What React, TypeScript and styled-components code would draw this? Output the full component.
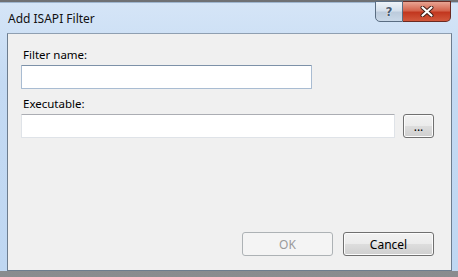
import styled, { createGlobalStyle } from "styled-components";

const GlobalStyle = createGlobalStyle`
  html, body {
    margin: 0;
    padding: 0;
    background: #7b7d80;
    overflow: hidden;
  }
  body {
    font-family: "Noto Sans", "Open Sans", "Liberation Sans", sans-serif;
    font-size: 12px;
  }
`;

const Screen = styled.div`
  width: 458px;
  height: 277px;
  display: flex;
  flex-direction: column;
  background: linear-gradient(#6f7174, #8a8c8f);
`;

const Window = styled.div`
  margin-top: 2px;
  height: 269px;
  display: flex;
  flex-direction: column;
  background: linear-gradient(180deg, #d5e5f7 0%, #c4daf3 30%, #bfd7f2 100%);
  border-top: 1px solid #9fb6cf;
  box-sizing: border-box;
`;

const TitleBar = styled.div`
  height: 30px;
  display: flex;
  align-items: flex-start;
  justify-content: space-between;
  padding-left: 8px;
  padding-right: 7px;
`;

const Title = styled.div`
  margin-top: 7px;
  font-size: 12px;
  color: #111;
`;

const CaptionButtons = styled.div`
  display: flex;
  margin-top: -2px;
`;

const CaptionButton = styled.div<{ $close?: boolean }>`
  width: ${(p) => (p.$close ? 48 : 28)}px;
  height: 21px;
  box-sizing: border-box;
  border: 1px solid ${(p) => (p.$close ? "#6b2a22" : "#5a6d82")};
  border-left-width: ${(p) => (p.$close ? 0 : 1)}px;
  border-radius: ${(p) => (p.$close ? "0 0 5px 0" : "0 0 0 5px")};
  background: ${(p) =>
    p.$close
      ? "linear-gradient(#e8a493 0%, #d4644d 45%, #c2371f 55%, #d2583c 100%)"
      : "linear-gradient(#eef3f8 0%, #d5e0ec 45%, #bccbdc 55%, #c9d8e8 100%)"};
  display: flex;
  align-items: center;
  justify-content: center;
  color: #4a5b70;
  font-family: "DejaVu Sans", sans-serif;
  font-weight: bold;
  font-size: 12px;
  text-shadow: 0 0 1px #fff, 0 0 1px #fff;
`;

const CloseGlyph = () => (
  <svg width="14" height="11" viewBox="0 0 14 11">
    <path d="M2.5 1.5 L11.5 9.5 M11.5 1.5 L2.5 9.5" stroke="#3b1a14" strokeWidth="4" strokeLinecap="round" />
    <path d="M2.5 1.5 L11.5 9.5 M11.5 1.5 L2.5 9.5" stroke="#ffffff" strokeWidth="2.2" strokeLinecap="round" />
  </svg>
);

const Client = styled.div`
  flex: 1;
  margin: 0 6px 0 7px;
  background: #f0f0f0;
  border: 1px solid #6d7d8f;
  border-top-color: #8f9fb1;
  display: flex;
  flex-direction: column;
  padding: 13px 17px 14px 13px;
  box-sizing: border-box;
`;

const Field = styled.div`
  display: flex;
  flex-direction: column;
  gap: 2px;
  margin-bottom: 7px;
`;

const Label = styled.label`
  padding-left: 2px;
  color: #000;
  font-size: 11.5px;
  line-height: 16px;
`;

const Row = styled.div`
  display: flex;
  align-items: center;
  gap: 8px;
`;

const TextInput = styled.div<{ $width: number; $focused?: boolean }>`
  width: ${(p) => p.$width}px;
  height: 24px;
  box-sizing: border-box;
  background: #fff;
  border: 1px solid ${(p) => (p.$focused ? "#a9bcd2" : "#dfe3e8")};
  border-top-color: ${(p) => (p.$focused ? "#7d91a8" : "#abadb3")};
  border-radius: 1px;
`;

const Spacer = styled.div`
  flex: 1;
`;

const Footer = styled.div`
  display: flex;
  justify-content: flex-end;
  gap: 10px;
`;

const Button = styled.div<{ $width: number; $disabled?: boolean }>`
  width: ${(p) => p.$width}px;
  height: 24px;
  box-sizing: border-box;
  border: 1px solid ${(p) => (p.$disabled ? "#adb2b5" : "#707070")};
  border-radius: 3px;
  background: ${(p) =>
    p.$disabled
      ? "#f4f4f4"
      : "linear-gradient(#f2f2f2 0%, #ebebeb 50%, #dddddd 51%, #cfcfcf 100%)"};
  box-shadow: inset 0 0 0 1px ${(p) => (p.$disabled ? "#f4f4f4" : "#fcfcfc")};
  color: ${(p) => (p.$disabled ? "#9a9a9a" : "#000")};
  display: flex;
  align-items: center;
  justify-content: center;
  font-size: 12px;
`;

const App = () => {
  return (
    <>
      <GlobalStyle />
      <Screen>
        <Window>
          <TitleBar>
            <Title>Add ISAPI Filter</Title>
            <CaptionButtons>
              <CaptionButton>?</CaptionButton>
              <CaptionButton $close>
                <CloseGlyph />
              </CaptionButton>
            </CaptionButtons>
          </TitleBar>
          <Client>
            <Field>
              <Label>Filter name:</Label>
              <TextInput $width={291} $focused />
            </Field>
            <Field>
              <Label>Executable:</Label>
              <Row>
                <TextInput $width={374} />
                <Button $width={31}>...</Button>
              </Row>
            </Field>
            <Spacer />
            <Footer>
              <Button $width={91} $disabled>
                OK
              </Button>
              <Button $width={91}>Cancel</Button>
            </Footer>
          </Client>
        </Window>
      </Screen>
    </>
  );
};

export default App;
